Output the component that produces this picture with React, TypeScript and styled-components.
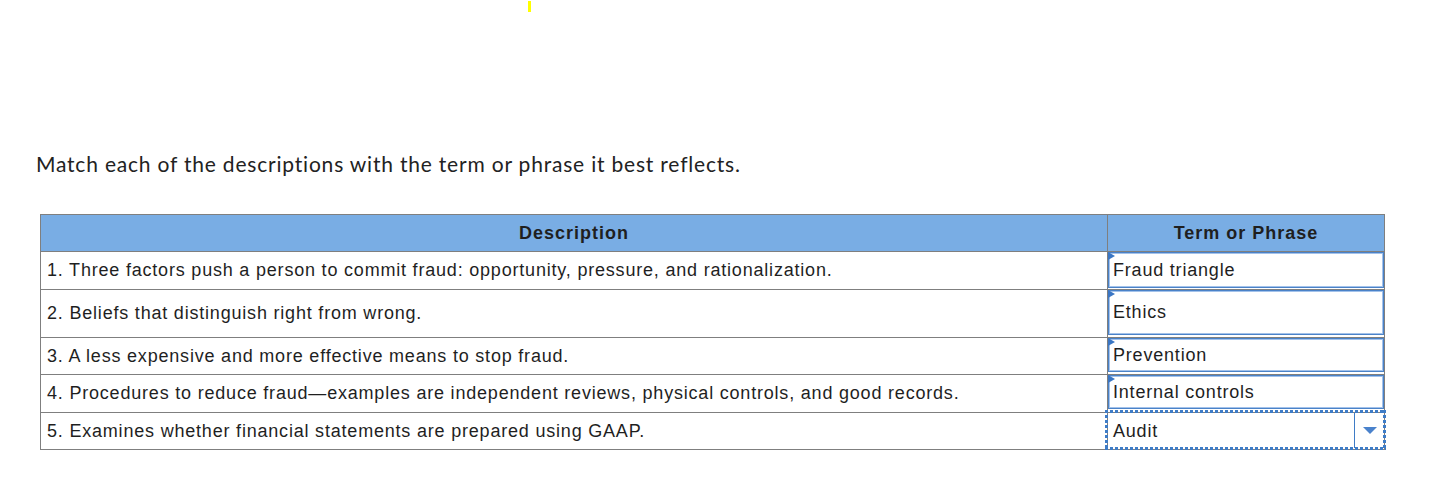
import React from "react";
import styled, { createGlobalStyle } from "styled-components";

const Global = createGlobalStyle`
  html, body { margin: 0; padding: 0; background: #ffffff; }
  body { font-family: "Liberation Sans", Arial, sans-serif; color: #222222; }
`;

const Page = styled.div`
  width: 1454px;
  height: 494px;
  overflow: hidden;
`;

const Marker = styled.div`
  width: 3px;
  height: 11px;
  margin: 1px 0 0 528px;
  background: #ffff00;
`;

const Prompt = styled.p`
  margin: 140px 0 0 36px;
  font-family: Lato, "Open Sans", sans-serif;
  font-size: 21px;
  letter-spacing: 0.8px;
  line-height: 24px;
  color: #222222;
`;

const Grid = styled.div`
  margin: 38px 0 0 40px;
  display: grid;
  grid-template-columns: 1067px 277px;
  border-top: 1px solid #7f7f7f;
  border-left: 1px solid #7f7f7f;
  width: max-content;
  font-size: 18px;
  letter-spacing: 0.8px;
  color: #1f1f1f;
`;

const Cell = styled.div<{ $h: number; $head?: boolean; $term?: boolean }>`
  box-sizing: border-box;
  height: ${(p) => p.$h}px;
  border-right: 1px solid #7f7f7f;
  border-bottom: 1px solid #7f7f7f;
  background: ${(p) => (p.$head ? "#79ade4" : "#ffffff")};
  display: flex;
  align-items: center;
  justify-content: ${(p) => (p.$head ? "center" : "flex-start")};
  font-weight: ${(p) => (p.$head ? 700 : 400)};
  letter-spacing: ${(p) => (p.$head ? "1px" : "0.8px")};
  padding: ${(p) => (p.$head || p.$term ? "0" : "0 0 0 6px")};
  position: relative;
  white-space: nowrap;
`;

const Answer = styled.div<{ $gap: number }>`
  box-sizing: border-box;
  align-self: flex-start;
  width: 276px;
  height: calc(100% - ${(p) => p.$gap}px);
  border: 1px solid #4a82c8;
  box-shadow: inset 0 0 0 1px #a3c2ea;
  display: flex;
  align-items: center;
  padding-left: 4px;
  position: relative;
  color: #1e1e1e;
`;

const Flag = styled.span`
  position: absolute;
  left: -1px;
  top: -1px;
  width: 0;
  height: 0;
  border-top: 4px solid transparent;
  border-bottom: 4px solid transparent;
  border-left: 7px solid #3a76c4;
`;

const Select = styled.div`
  box-sizing: border-box;
  width: 100%;
  height: 100%;
  display: flex;
  align-items: stretch;
`;

const SelectValue = styled.span`
  flex: 1;
  display: flex;
  align-items: center;
  padding-left: 5px;
  color: #1e1e1e;
`;

const SelectButton = styled.span`
  width: 29px;
  border-left: 1px solid #3f7cc6;
  display: flex;
  align-items: center;
  justify-content: center;
  margin-bottom: 1px;
`;

const FocusRing = styled.span`
  position: absolute;
  top: -3px;
  left: -3px;
  right: -2px;
  bottom: -1px;
  pointer-events: none;
  background:
    repeating-linear-gradient(90deg, #3f7cc6 0 3px, transparent 3px 5px) left top / 100% 3px no-repeat,
    repeating-linear-gradient(90deg, #3f7cc6 0 3px, transparent 3px 5px) left bottom / 100% 3px no-repeat,
    repeating-linear-gradient(180deg, #3f7cc6 0 3px, transparent 3px 5px) left top / 3px 100% no-repeat,
    repeating-linear-gradient(180deg, #3f7cc6 0 3px, transparent 3px 5px) right top / 3px 100% no-repeat;
`;

const rows = [
  { d: "1. Three factors push a person to commit fraud: opportunity, pressure, and rationalization.", t: "Fraud triangle", h: 38, gap: 1 },
  { d: "2. Beliefs that distinguish right from wrong.", t: "Ethics", h: 48, gap: 2 },
  { d: "3. A less expensive and more effective means to stop fraud.", t: "Prevention", h: 37, gap: 2 },
  { d: "4. Procedures to reduce fraud\u2014examples are independent reviews, physical controls, and good records.", t: "Internal controls", h: 38, gap: 3 },
];

export default function App() {
  return (
    <Page>
      <Global />
      <Marker />
      <Prompt>Match each of the descriptions with the term or phrase it best reflects.</Prompt>
      <Grid>
        <Cell $h={37} $head>Description</Cell>
        <Cell $h={37} $head>Term or Phrase</Cell>
        {rows.map((r) => (
          <React.Fragment key={r.t}>
            <Cell $h={r.h}>{r.d}</Cell>
            <Cell $h={r.h} $term>
              <Answer $gap={r.gap}>
                <Flag />
                {r.t}
              </Answer>
            </Cell>
          </React.Fragment>
        ))}
        <Cell $h={37}>5. Examines whether financial statements are prepared using GAAP.</Cell>
        <Cell $h={37} $term>
          <Select>
            <SelectValue>Audit</SelectValue>
            <SelectButton>
              <svg width="14" height="7" viewBox="0 0 14 7">
                <path d="M0 0 H14 L7 7 Z" fill="#4a82cc" />
              </svg>
            </SelectButton>
          </Select>
          <FocusRing />
        </Cell>
      </Grid>
    </Page>
  );
}
